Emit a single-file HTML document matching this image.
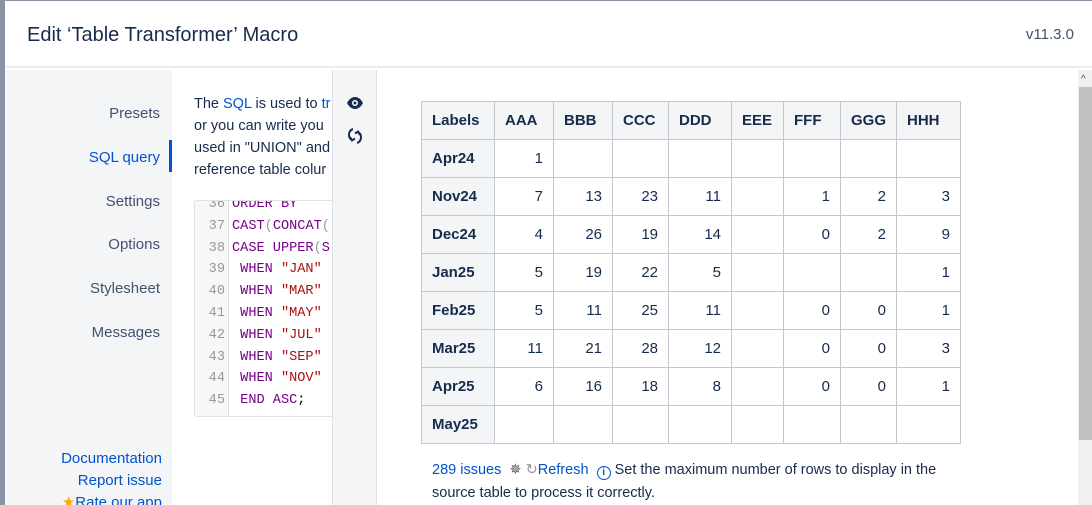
<!DOCTYPE html>
<html><head><meta charset="utf-8">
<style>
*{box-sizing:border-box;margin:0;padding:0}
html,body{width:1092px;height:505px;overflow:hidden}
body{background:#8993a4;font-family:"Liberation Sans",sans-serif;color:#172b4d;position:relative}
.modal{position:absolute;left:5px;top:1px;right:0;height:520px;background:#fff}
.hdr{position:absolute;left:0;top:0;right:0;height:67px;border-bottom:2px solid #ebecf0}
.title{position:absolute;left:22px;top:23px;font-size:20px;color:#172b4d}
.ver{position:absolute;right:18px;top:25px;font-size:15px;color:#42526e}
.side{position:absolute;left:0;top:69px;width:167px;bottom:0;background:#f4f5f7}
.side .it{position:absolute;right:12px;font-size:15px;color:#42526e}
.side .act{color:#0052cc}
.bar{position:absolute;right:0;width:3px;height:32px;top:70px;background:#0052cc}
.links{position:absolute;right:10px;font-size:15px;color:#0052cc;text-align:right}
.mid{position:absolute;left:167px;top:69px;width:160px;bottom:0;background:#fff;overflow:hidden}
.desc{position:absolute;left:22px;top:23px;width:300px;font-size:14.5px;line-height:22px;color:#172b4d;white-space:nowrap}
.desc a{color:#0052cc}
.code{position:absolute;left:22px;top:130px;width:200px;height:217px;border:1px solid #dfe1e6;border-radius:3px;overflow:hidden;font-family:"Liberation Mono",monospace;font-size:13.6px;background:#fff}
.gut{position:absolute;left:0;top:0;width:34px;height:100%;background:#f7f7f7;border-right:1px solid #ddd}
.ln{position:absolute;left:0;width:30px;text-align:right;color:#999}
.cl{position:absolute;left:37px;white-space:pre;color:#770088}
.s{color:#aa1111}.p{color:#999}.d{color:#000}
.tool{position:absolute;left:327px;top:69px;width:45px;bottom:0;background:#f4f5f7;border-left:1px solid #dfe1e6;border-right:1px solid #dfe1e6}
.right{position:absolute;left:372px;top:69px;right:14px;bottom:0;background:#fff}
table{position:absolute;left:44px;top:31px;border-collapse:collapse;font-size:15px}
td,th{border:1px solid #c1c7d0;height:38px;padding:0 10px}
th{background:#f4f5f7;font-weight:bold;text-align:left;color:#172b4d}
td{text-align:right;color:#172b4d}
td.l{background:#f4f5f7;font-weight:bold;text-align:left}
.foot{position:absolute;left:55px;top:389px;font-size:14.5px;line-height:23px;color:#172b4d;width:580px}
.foot a{color:#0052cc}
.sb{position:absolute;right:0;top:69px;width:14px;bottom:0;background:#f0f0f0}
.thumb{position:absolute;left:1px;right:0;top:17px;height:353px;background:#c1c1c1}
</style></head><body>
<div class="modal">
 <div class="hdr"><div class="title">Edit ‘Table Transformer’ Macro</div><div class="ver">v11.3.0</div></div>
 <div class="side">
  <div class="it" style="top:35px">Presets</div>
  <div class="it act" style="top:79px">SQL query</div>
  <div class="bar"></div>
  <div class="it" style="top:123px">Settings</div>
  <div class="it" style="top:166px">Options</div>
  <div class="it" style="top:210px">Stylesheet</div>
  <div class="it" style="top:254px">Messages</div>
  <div class="links" style="top:380px">Documentation</div>
  <div class="links" style="top:402px">Report issue</div>
  <div class="links" style="top:423px"><span style="color:#ffab00">★</span>Rate our app</div>
 </div>
 <div class="mid">
  <div class="desc">The <a>SQL</a> is used to <a>tr</a><br>or you can write you<br>used in "UNION" and<br>reference table colur</div>
  <div class="code"><div class="gut"></div>
   <div class="ln" style="top:-4px">36</div><div class="cl" style="top:-4px">ORDER BY</div>
   <div class="ln" style="top:18px">37</div><div class="cl" style="top:18px">CAST<span class="p">(</span>CONCAT<span class="p">(</span></div>
   <div class="ln" style="top:40px">38</div><div class="cl" style="top:40px">CASE UPPER<span class="p">(</span>S</div>
   <div class="ln" style="top:61px">39</div><div class="cl" style="top:61px"> WHEN <span class="s">"JAN"</span></div>
   <div class="ln" style="top:83px">40</div><div class="cl" style="top:83px"> WHEN <span class="s">"MAR"</span></div>
   <div class="ln" style="top:105px">41</div><div class="cl" style="top:105px"> WHEN <span class="s">"MAY"</span></div>
   <div class="ln" style="top:127px">42</div><div class="cl" style="top:127px"> WHEN <span class="s">"JUL"</span></div>
   <div class="ln" style="top:149px">43</div><div class="cl" style="top:149px"> WHEN <span class="s">"SEP"</span></div>
   <div class="ln" style="top:170px">44</div><div class="cl" style="top:170px"> WHEN <span class="s">"NOV"</span></div>
   <div class="ln" style="top:192px">45</div><div class="cl" style="top:192px"> END ASC<span class="d">;</span></div>
  </div>
 </div>
 <div class="tool">
  <svg style="position:absolute;left:13px;top:26px" width="18" height="14" viewBox="0 0 18 14"><path d="M1 7C3 3 6 1 9 1s6 2 8 6c-2 4-5 6-8 6S3 11 1 7z" fill="#172b4d"/><circle cx="9" cy="7" r="3" fill="#fff"/><circle cx="9" cy="7" r="1.5" fill="#172b4d"/></svg>
  <svg style="position:absolute;left:14px;top:57px" width="16" height="18" viewBox="0 0 16 18" fill="none" stroke="#172b4d" stroke-width="2"><path d="M6 2C3 3 2 5 2 8c0 2 1 4 3 5"/><path d="M10 16c3-1 4-3 4-6 0-2-1-4-3-5"/><path d="M3 10l2 3.5 3-2" /><path d="M13 8l-2-3.5-3 2"/></svg>
 </div>
 <div class="right">
  <table>
   <tr><th style="width:73px">Labels</th><th style="width:59px">AAA</th><th style="width:59px">BBB</th><th style="width:56px">CCC</th><th style="width:63px">DDD</th><th style="width:52px">EEE</th><th style="width:57px">FFF</th><th style="width:56px">GGG</th><th style="width:64px">HHH</th></tr>
   <tr><td class="l">Apr24</td><td>1</td><td></td><td></td><td></td><td></td><td></td><td></td><td></td></tr>
   <tr><td class="l">Nov24</td><td>7</td><td>13</td><td>23</td><td>11</td><td></td><td>1</td><td>2</td><td>3</td></tr>
   <tr><td class="l">Dec24</td><td>4</td><td>26</td><td>19</td><td>14</td><td></td><td>0</td><td>2</td><td>9</td></tr>
   <tr><td class="l">Jan25</td><td>5</td><td>19</td><td>22</td><td>5</td><td></td><td></td><td></td><td>1</td></tr>
   <tr><td class="l">Feb25</td><td>5</td><td>11</td><td>25</td><td>11</td><td></td><td>0</td><td>0</td><td>1</td></tr>
   <tr><td class="l">Mar25</td><td>11</td><td>21</td><td>28</td><td>12</td><td></td><td>0</td><td>0</td><td>3</td></tr>
   <tr><td class="l">Apr25</td><td>6</td><td>16</td><td>18</td><td>8</td><td></td><td>0</td><td>0</td><td>1</td></tr>
   <tr><td class="l">May25</td><td></td><td></td><td></td><td></td><td></td><td></td><td></td><td></td></tr>
  </table>
  <div class="foot"><a>289 issues</a> &nbsp;<span style="color:#555">✵</span> <span style="color:#999">↻</span><a>Refresh</a> &nbsp;<span style="display:inline-block;width:14px;height:14px;border:1.5px solid #0052cc;border-radius:50%;font-size:10px;line-height:11px;text-align:center;color:#0052cc;font-weight:bold;vertical-align:-1px">i</span> Set the maximum number of rows to display in the<br>source table to process it correctly.</div>
 </div>
 <div class="sb"><div style="position:absolute;left:3px;top:4px;font-size:10px;color:#505050">^</div><div class="thumb"></div></div>
</div>
</body></html>
